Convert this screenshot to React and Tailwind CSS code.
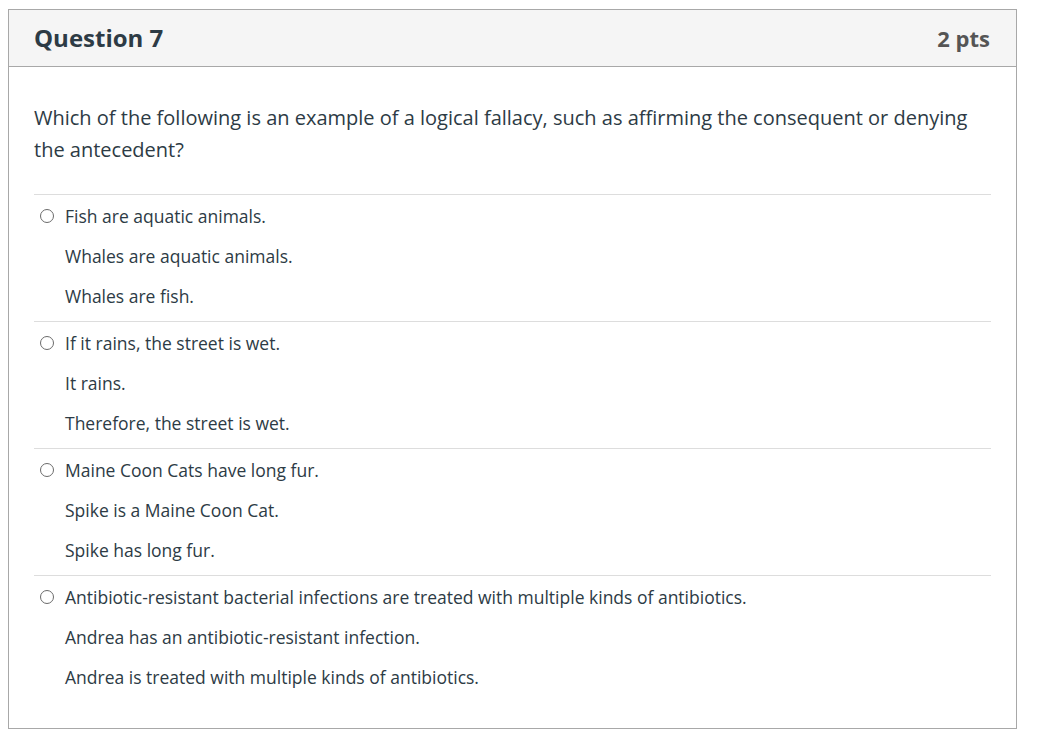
const answers = [
  ["Fish are aquatic animals.", "Whales are aquatic animals.", "Whales are fish."],
  ["If it rains, the street is wet.", "It rains.", "Therefore, the street is wet."],
  ["Maine Coon Cats have long fur.", "Spike is a Maine Coon Cat.", "Spike has long fur."],
  [
    "Antibiotic-resistant bacterial infections are treated with multiple kinds of antibiotics.",
    "Andrea has an antibiotic-resistant infection.",
    "Andrea is treated with multiple kinds of antibiotics.",
  ],
];

const App = () => {
  return (
    <div className="min-h-[740px] bg-white pl-[8px] pt-[9px] w-[1040px] text-[#2d3b45] font-['Open_Sans',sans-serif]">
      <div className="w-[1009px] border border-[#a8a8a8]">
        {/* header */}
        <div className="h-[57px] bg-[#f5f5f5] border-b border-[#a8a8a8] flex items-center justify-between pl-[25px] pr-[26px]">
          <h2 className="text-[24px] font-bold leading-none">Question 7</h2>
          <span className="text-[22px] font-bold text-[#555555] leading-none">2 pts</span>
        </div>

        <div className="px-[25px] pt-[35px] pb-[26px]">
          <p className="text-[20px] leading-[32px] pr-[10px]">
            Which of the following is an example of a logical fallacy, such as affirming the consequent or denying
            the antecedent?
          </p>

          <div className="mt-[28px]">
            {answers.map((lines, i) => (
              <label key={i} className="flex border-t border-[#dddddd] pt-[9px] pb-[13px] cursor-pointer">
                <div className="w-[31px] h-[24px] flex items-center pl-[6px]">
                  <span className="w-[14px] h-[14px] rounded-full border-[1.5px] border-[#6b6b6b] bg-white" />
                </div>
                <div className="flex flex-col gap-[16px] text-[17.5px] leading-[24px]">
                  {lines.map((l) => (
                    <div key={l}>{l}</div>
                  ))}
                </div>
              </label>
            ))}
          </div>
        </div>
      </div>
    </div>
  );
};

export default App;
